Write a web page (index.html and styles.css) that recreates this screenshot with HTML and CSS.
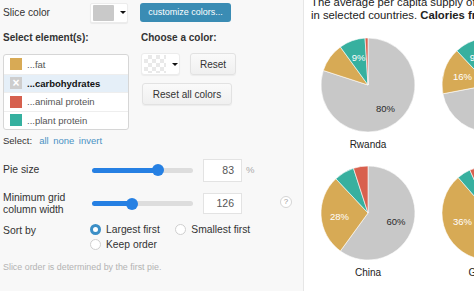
FILE: index.html
```html
<!DOCTYPE html>
<html>
<head>
<meta charset="utf-8">
<link rel="stylesheet" href="styles.css">
</head>
<body>
<div class="app">
  <aside class="side">
    <div class="row-top">
      <span class="lbl-slice">Slice color</span>
      <div class="swatch-btn"><span class="swatch-fill"></span><span class="caret"></span></div>
      <button class="btn-primary">customize colors...</button>
    </div>

    <div class="pickers">
      <div class="col-left">
        <div class="heading">Select element(s):</div>
        <ul class="elist">
          <li class="eitem"><span class="sw sw-fat"></span>...fat</li>
          <li class="eitem is-selected"><span class="sw sw-carb">×</span>...carbohydrates</li>
          <li class="eitem"><span class="sw sw-animal"></span>...animal protein</li>
          <li class="eitem"><span class="sw sw-plant"></span>...plant protein</li>
        </ul>
        <div class="select-links">Select: <a class="lnk">all</a><a class="lnk">none</a><a class="lnk">invert</a></div>
      </div>
      <div class="col-right">
        <div class="heading">Choose a color:</div>
        <div class="btn-row">
          <div class="checker-btn"><span class="checker"></span><span class="caret"></span></div>
          <button class="btn btn-reset">Reset</button>
        </div>
        <button class="btn btn-wide">Reset all colors</button>
      </div>
    </div>

    <div class="form-row row-pie">
      <span class="f-label">Pie size</span>
      <div class="slider" style="--v:65.3%"><span class="thumb"></span></div>
      <span class="num">83</span>
      <span class="unit">%</span>
    </div>

    <div class="form-row row-grid">
      <span class="f-label">Minimum grid<br>column width</span>
      <div class="slider" style="--v:39.6%"><span class="thumb"></span></div>
      <span class="num">126</span>
      <span class="help">?</span>
    </div>

    <div class="form-row row-sort">
      <span class="f-label sort-label">Sort by</span>
      <div class="radios">
        <span class="radio-opt"><span class="radio is-checked"></span>Largest first</span>
        <span class="radio-opt"><span class="radio"></span>Smallest first</span>
        <span class="radio-opt"><span class="radio"></span>Keep order</span>
      </div>
    </div>

    <div class="note">Slice order is determined by the first pie.</div>
  </aside>

  <main class="chart">
    <div class="title">
      <div class="tline">The average per capita supply of calories</div>
      <div class="tline">in selected countries. <b>Calories from</b></div>
    </div>
    <div class="pies">
      <div class="cell">
        <svg class="pie" viewBox="0 0 94 94" width="94" height="94">
          <path class="s-gray" d="M47 47 L47 0 A47 47 0 1 1 2.30 32.48 Z"/>
          <path class="s-yel" d="M47 47 L2.30 32.48 A47 47 0 0 1 19.37 8.98 Z"/>
          <path class="s-teal" d="M47 47 L19.37 8.98 A47 47 0 0 1 44.05 0.09 Z"/>
          <path class="s-red" d="M47 47 L44.05 0.09 A47 47 0 0 1 47 0 Z"/>
          <text class="pl dark" x="64.5" y="70">80%</text>
          <text class="pl light" x="37.5" y="19.5">9%</text>
        </svg>
        <div class="country">Rwanda</div>
      </div>
      <div class="cell">
        <svg class="pie" viewBox="0 0 94 94" width="94" height="94">
          <path class="s-gray" d="M47 47 L47 0 A47 47 0 1 1 0.83 55.81 Z"/>
          <path class="s-yel" d="M47 47 L0.83 55.81 A47 47 0 0 1 14.83 12.74 Z"/>
          <path class="s-teal" d="M47 47 L14.83 12.74 A47 47 0 0 1 38.19 0.83 Z"/>
          <path class="s-red" d="M47 47 L38.19 0.83 A47 47 0 0 1 47 0 Z"/>
          <text class="pl light" x="20.5" y="38.5">16%</text>
          <text class="pl light" x="34.5" y="19.5">9%</text>
          <text class="pl dark" x="68.5" y="65">72%</text>
        </svg>
        <div class="country">India</div>
      </div>
      <div class="cell">
        <svg class="pie" viewBox="0 0 94 94" width="94" height="94">
          <path class="s-gray" d="M47 47 L47 0 A47 47 0 1 1 19.37 85.02 Z"/>
          <path class="s-yel" d="M47 47 L19.37 85.02 A47 47 0 0 1 14.83 12.74 Z"/>
          <path class="s-teal" d="M47 47 L14.83 12.74 A47 47 0 0 1 32.48 2.30 Z"/>
          <path class="s-red" d="M47 47 L32.48 2.30 A47 47 0 0 1 47 0 Z"/>
          <text class="pl dark" x="75" y="55.5">60%</text>
          <text class="pl light" x="18.5" y="50">28%</text>
        </svg>
        <div class="country">China</div>
      </div>
      <div class="cell">
        <svg class="pie" viewBox="0 0 94 94" width="94" height="94">
          <path class="s-gray" d="M47 47 L47 0 A47 47 0 1 1 39.32 93.37 Z"/>
          <path class="s-yel" d="M47 47 L39.32 93.37 A47 47 0 0 1 16.16 11.53 Z"/>
          <path class="s-teal" d="M47 47 L16.16 11.53 A47 47 0 0 1 27.88 4.06 Z"/>
          <path class="s-red" d="M47 47 L27.88 4.06 A47 47 0 0 1 47 0 Z"/>
          <text class="pl light" x="20.5" y="55">36%</text>
          <text class="pl dark" x="75" y="50">53%</text>
        </svg>
        <div class="country">Germany</div>
      </div>
    </div>
  </main>
</div>
</body>
</html>
```

FILE: styles.css
```css
html, body {
  margin: 0;
  padding: 0;
}
body {
  width: 474px;
  height: 291px;
  overflow: hidden;
  font-family: "Liberation Sans", Arial, sans-serif;
  color: #333;
  background: #fff;
}
.app {
  display: flex;
  height: 291px;
}

/* ---------- side panel ---------- */
.side {
  width: 304px;
  flex: none;
  box-sizing: border-box;
  border-right: 1px solid #e6e6e6;
  background: #f8f8f8;
  padding-left: 3px;
}
.row-top {
  display: flex;
  align-items: center;
  height: 21px;
  margin-top: 2px;
}
.lbl-slice {
  width: 87px;
  font-size: 10.2px;
  color: #333;
}
.swatch-btn {
  width: 38px;
  height: 20px;
  box-sizing: border-box;
  display: flex;
  align-items: center;
  padding-left: 2px;
  background: #fff;
  border: 1px solid #ececec;
  border-radius: 2px;
  box-shadow: 0 1px 1px rgba(0,0,0,0.06);
}
.swatch-fill {
  width: 21px;
  height: 16px;
  background: #c9c9c9;
  border-radius: 1px;
}
.caret {
  width: 0;
  height: 0;
  margin-left: 6px;
  border-left: 3px solid transparent;
  border-right: 3px solid transparent;
  border-top: 3px solid #111;
}
.btn-primary {
  margin-left: 12px;
  width: 91px;
  height: 19px;
  padding: 0;
  border: 0;
  border-radius: 3px;
  background: #3a8cb4;
  color: #fff;
  font-family: inherit;
  font-size: 9px;
  line-height: 19px;
}

.pickers {
  display: flex;
}
.col-left {
  width: 138px;
  display: flex;
  flex-direction: column;
}
.col-right {
  display: flex;
  flex-direction: column;
  align-items: flex-start;
}
.heading {
  margin-top: 9px;
  font-weight: bold;
  font-size: 10px;
  line-height: 12px;
  color: #333;
}
.elist {
  list-style: none;
  margin: 10px 0 0 0;
  padding: 0;
  width: 126px;
  box-sizing: border-box;
  background: #fff;
  border: 1px solid #d6d6d6;
  border-radius: 3px;
  overflow: hidden;
}
.eitem {
  height: 18.5px;
  box-sizing: border-box;
  display: flex;
  align-items: center;
  padding-left: 6px;
  font-size: 9.5px;
  color: #555;
  border-top: 1px solid #eeeeee;
}
.eitem:first-child {
  border-top: 0;
}
.eitem.is-selected {
  background: #e5eff8;
  color: #111;
  font-weight: bold;
}
.sw {
  width: 12px;
  height: 12px;
  margin-right: 5px;
  flex: none;
  display: flex;
  align-items: center;
  justify-content: center;
  color: #fff;
  font-size: 12px;
  font-weight: bold;
  line-height: 12px;
}
.sw-fat { background: #d8aa55; }
.sw-carb { background: #cdcdcd; }
.sw-animal { background: #d6604e; }
.sw-plant { background: #35b09f; }

.select-links {
  margin-top: 4.5px;
  font-size: 9.5px;
  line-height: 12px;
  color: #333;
}
.lnk {
  color: #4a92c4;
  margin-left: 4.5px;
}

.btn-row {
  display: flex;
  margin-top: 9px;
}
.checker-btn {
  width: 39px;
  height: 22px;
  box-sizing: border-box;
  display: flex;
  align-items: center;
  padding-left: 2px;
  background: #fff;
  border: 1px solid #ececec;
  border-radius: 3px;
  box-shadow: 0 1px 1px rgba(0,0,0,0.05);
}
.checker {
  width: 22px;
  height: 18px;
  background-color: #fff;
  background-image: conic-gradient(#e9e9e9 25%, #fff 0 50%, #e9e9e9 0 75%, #fff 0);
  background-size: 8px 8px;
}
.btn {
  height: 22px;
  padding: 0;
  box-sizing: border-box;
  border: 1px solid #e2e2e2;
  border-radius: 3px;
  background: linear-gradient(#fafafa, #f0f0f0);
  color: #333;
  font-family: inherit;
  font-size: 10px;
  box-shadow: 0 1px 1px rgba(0,0,0,0.05);
}
.btn-reset {
  width: 46px;
  margin-left: 10px;
}
.btn-wide {
  width: 90px;
  margin-top: 8px;
  margin-left: 1px;
}

/* ---------- form rows ---------- */
.form-row {
  display: flex;
  align-items: center;
}
.f-label {
  width: 89px;
  flex: none;
  font-size: 10.4px;
  line-height: 11.7px;
  color: #333;
}
.row-pie {
  margin-top: 12.3px;
  height: 23px;
}
.row-grid {
  margin-top: 10px;
  height: 24px;
}
.slider {
  position: relative;
  width: 101px;
  height: 5px;
  flex: none;
  border-radius: 3px;
  background: linear-gradient(to right, #2680e3 0 var(--v), #dddddd var(--v) 100%);
}
.thumb {
  position: absolute;
  top: 50%;
  left: var(--v);
  width: 12px;
  height: 12px;
  margin: -6px 0 0 -6px;
  border-radius: 50%;
  background: #2680e3;
}
.num {
  margin-left: 10px;
  width: 39px;
  height: 23px;
  box-sizing: border-box;
  background: #fff;
  border: 1px solid #e3e3e3;
  text-align: right;
  padding-right: 7px;
  font-size: 10.5px;
  line-height: 21px;
  color: #555;
}
.row-grid .num {
  height: 21px;
  line-height: 19px;
}
.unit {
  margin-left: 4px;
  margin-top: -2px;
  font-size: 9.5px;
  color: #aaa;
}
.help {
  margin-left: auto;
  margin-right: 11px;
  margin-top: -4px;
  width: 12px;
  height: 12px;
  box-sizing: border-box;
  border: 1px solid #d5d5d5;
  border-radius: 50%;
  background: #fff;
  color: #999;
  font-size: 8px;
  line-height: 10px;
  text-align: center;
}

.row-sort {
  margin-top: 6.5px;
  align-items: flex-start;
}
.sort-label {
  padding-top: 3px;
}
.radios {
  display: flex;
  flex-wrap: wrap;
  margin-left: -2.5px;
  width: 210px;
}
.radio-opt {
  display: flex;
  align-items: center;
  height: 15px;
  margin-right: 15px;
  font-size: 10.3px;
  color: #333;
}
.radio {
  width: 11px;
  height: 11px;
  box-sizing: border-box;
  margin-right: 5.5px;
  border: 1px solid #cfcfcf;
  border-radius: 50%;
  background: #fff;
}
.radio.is-checked {
  border: 3.5px solid #3b8ec6;
}

.note {
  margin-top: 9.3px;
  font-size: 8.9px;
  line-height: 11px;
  color: #b3b3b3;
}

/* ---------- chart ---------- */
.chart {
  flex: 1;
  min-width: 0;
  overflow: hidden;
  background: #fff;
}
.title {
  margin: -4px 0 0 7px;
  font-size: 11.3px;
  line-height: 13px;
  color: #222;
  white-space: nowrap;
}
.pies {
  display: grid;
  grid-template-columns: 121px 121px;
  row-gap: 15px;
  margin: 16px 0 0 3.5px;
}
.cell {
  display: flex;
  flex-direction: column;
  align-items: center;
}
.pie {
  display: block;
  overflow: visible;
}
.pie path {
  stroke: #fff;
  stroke-width: 0.6;
}
.s-gray { fill: #c8c8c8; }
.s-yel { fill: #d7aa55; }
.s-teal { fill: #37b09f; }
.s-red { fill: #d8604e; }
.pl {
  font-family: "Liberation Sans", Arial, sans-serif;
  font-size: 9.5px;
  text-anchor: middle;
  dominant-baseline: central;
}
.pl.dark { fill: #2a2a2a; }
.pl.light { fill: #fff; }
.country {
  margin-top: 7px;
  font-size: 10px;
  line-height: 12px;
  color: #222;
  white-space: nowrap;
}
```
